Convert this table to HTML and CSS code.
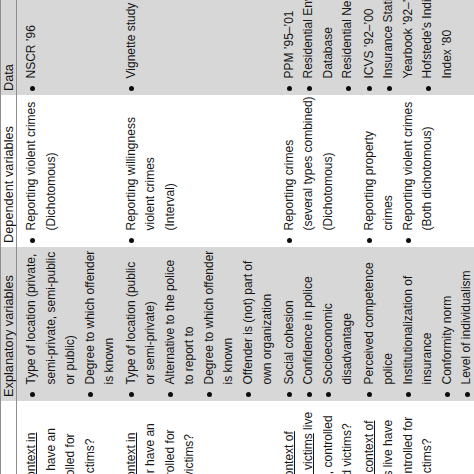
FILE: index.html
```html
<!DOCTYPE html>
<html lang="en">
<head>
<meta charset="utf-8">
<title>Research design table</title>
<link rel="stylesheet" href="styles.css">
</head>
<body>
<div class="stage">
  <div class="rot">
    <table class="tbl">
      <colgroup>
        <col class="w-q">
        <col class="w-e">
        <col class="w-d">
        <col class="w-s">
      </colgroup>
      <thead>
        <tr>
          <th class="q">Research question</th>
          <th class="e shade">Explanatory variables</th>
          <th class="d">Dependent variables</th>
          <th class="s shade">Data</th>
        </tr>
      </thead>
      <tbody>
        <tr>
          <td class="q">1. Does the <span class="u">situational context in</span><br>which the offence occurs have an<br>effect on reporting, controlled for<br>other characteristics of victims?</td>
          <td class="e shade">
            <ul class="list">
              <li><span>Type of location (private,<br>semi-private, semi-public<br>or public)</span></li>
              <li><span>Degree to which offender<br>is known</span></li>
            </ul>
          </td>
          <td class="d">
            <ul class="list">
              <li><span>Reporting violent crimes<br>(Dichotomous)</span></li>
            </ul>
          </td>
          <td class="s shade">
            <ul class="list">
              <li><span>NSCR ’96</span></li>
            </ul>
          </td>
        </tr>
        <tr>
          <td class="q">2. Does the <span class="u">situational context in</span><br>which crimes would occur have an<br>effect on intentions, controlled for<br>the characteristics of its victims?</td>
          <td class="e shade">
            <ul class="list">
              <li><span>Type of location (public<br>or semi-private)</span></li>
              <li><span>Alternative to the police<br>to report to</span></li>
              <li><span>Degree to which offender<br>is known</span></li>
              <li><span>Offender is (not) part of<br>own organization</span></li>
            </ul>
          </td>
          <td class="d">
            <ul class="list">
              <li><span>Reporting willingness<br>violent crimes<br>(Interval)</span></li>
            </ul>
          </td>
          <td class="s shade">
            <ul class="list">
              <li><span>Vignette study</span></li>
            </ul>
          </td>
        </tr>
        <tr>
          <td class="q">3. Does the <span class="u">residential context of</span><br><span class="u">neighbourhoods in which victims</span> live<br>have effects on reporting, controlled<br>for features of crimes and victims?</td>
          <td class="e shade">
            <ul class="list">
              <li><span>Social cohesion</span></li>
              <li><span>Confidence in police</span></li>
              <li><span>Socioeconomic<br>disadvantage</span></li>
            </ul>
          </td>
          <td class="d">
            <ul class="list">
              <li><span>Reporting crimes<br>(several types combined)<br>(Dichotomous)</span></li>
            </ul>
          </td>
          <td class="s shade">
            <ul class="list">
              <li><span>PPM ’95–’01</span></li>
              <li><span>Residential Environment Database</span></li>
              <li><span>Residential Needs Survey</span></li>
            </ul>
          </td>
        </tr>
        <tr>
          <td class="q">4. Does the <span class="u">international context of</span><br><span class="u">countries</span> in which victims live have<br>an effect on reporting, controlled for<br>other characteristics of victims?</td>
          <td class="e shade">
            <ul class="list">
              <li><span>Perceived competence<br>police</span></li>
              <li><span>Institutionalization of<br>insurance</span></li>
              <li><span>Conformity norm</span></li>
              <li><span>Level of individualism</span></li>
            </ul>
          </td>
          <td class="d">
            <ul class="list">
              <li><span>Reporting property<br>crimes</span></li>
              <li><span>Reporting violent crimes<br>(Both dichotomous)</span></li>
            </ul>
          </td>
          <td class="s shade">
            <ul class="list">
              <li><span>ICVS ’92–’00</span></li>
              <li><span>Insurance Statistics Yearbook ’92–’99</span></li>
              <li><span>Hofstede’s Individualism Index ’80</span></li>
            </ul>
          </td>
        </tr>
      </tbody>
    </table>
  </div>
</div>
</body>
</html>
```
FILE: styles.css
```css
html, body {
  margin: 0;
  padding: 0;
  background: #ffffff;
}

.stage {
  width: 474px;
  height: 474px;
  overflow: hidden;
}

.rot {
  width: 685px;
  transform-origin: 0 0;
  transform: translateY(610px) rotate(-90deg);
}

.tbl {
  width: 685px;
  table-layout: fixed;
  border-collapse: separate;
  border-spacing: 0;
  font-family: "Liberation Sans", Arial, sans-serif;
  font-size: 12px;
  line-height: 19.5px;
  color: #151515;
}

.w-q { width: 209px; }
.w-e { width: 154px; }
.w-d { width: 152px; }
.w-s { width: 170px; }

.tbl th {
  font-weight: normal;
  font-size: 12.75px;
  line-height: 14px;
  padding: 1px 0 0 4px;
  text-align: left;
  vertical-align: top;
  white-space: nowrap;
  border-top: 1px solid #8e8e8e;
  border-bottom: 1px solid #8e8e8e;
}

.tbl td {
  vertical-align: top;
  padding: 1px 0 1px 4px;
}

.tbl tbody tr:first-child td {
  padding-top: 5px;
}

.tbl td.q,
.tbl td.e,
.tbl td.d {
  white-space: nowrap;
}

.shade {
  background: #d7d7d7;
}

.u {
  text-decoration: underline;
}

.list {
  margin: 0;
  padding: 0;
  list-style: none;
}

.list li {
  display: flex;
}

.list li::before {
  content: "";
  flex: none;
  width: 5px;
  height: 5px;
  border-radius: 50%;
  background: #0d0d0d;
  margin: 7.5px 7.5px 0 0;
}
```
